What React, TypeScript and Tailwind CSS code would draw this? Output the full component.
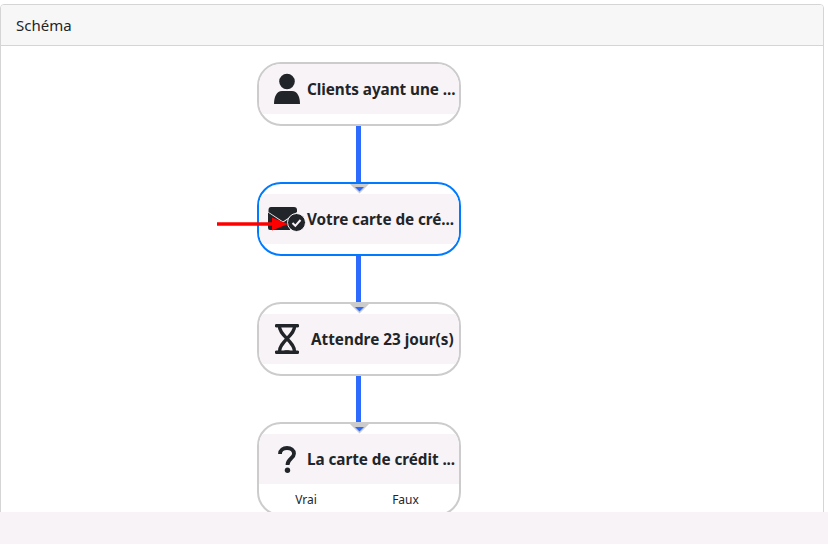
import React from "react";

const Person = () => (
  <svg width="28" height="32" viewBox="0 0 28 32" fill="#212529">
    <circle cx="14" cy="8.500" r="7.800" />
    <path d="M1 31 C1 24 3.500 18 9 18 L19 18 C24.500 18 27 24 27 31 Z" />
  </svg>
);

const Mail = () => (
  <div className="relative w-[38px] h-[32px]">
    <svg className="absolute left-0 top-[4px]" width="30" height="24" viewBox="0 0 30 24" fill="#212529">
      <path d="M3 0 H26 Q29 0 29 3 V5 L15 14.500 L0.500 5 V3 Q0.500 0 3 0 Z" />
      <path d="M0 5.500 L15 15.500 L22 11 L22 23 H2 Q0 23 0 21 Z" />
    </svg>
    <svg className="absolute left-[19px] top-[10px]" width="19" height="19" viewBox="0 0 19 19">
      <circle cx="9.500" cy="9.500" r="9" fill="#212529" stroke="#f8f3f7" strokeWidth="1" />
      <path d="M5.500 10 L8.300 12.800 L13.500 7" fill="none" stroke="#f8f3f7" strokeWidth="2" />
    </svg>
  </div>
);

const Hourglass = () => (
  <svg width="24" height="30" viewBox="0 0 24 30" fill="none" stroke="#212529" strokeLinecap="round">
    <path d="M1.500 1.700 H22.500 M1.500 28.300 H22.500" strokeWidth="3.400" />
    <path d="M4.500 2 C3.500 11 20.500 18 19.500 28 M19.500 2 C20.500 11 3.500 18 4.500 28" strokeWidth="3.400" />
    <path d="M7 28 C9 25.500 15 25.500 17 28 Z" fill="#212529" stroke="none" />
  </svg>
);

const Question = () => (
  <svg width="18" height="27" viewBox="0 0 18 27" fill="none" stroke="#212529" strokeWidth="3.800">
    <path d="M2 8 C2 3.800 5.200 2 9 2 C13 2 16 4.300 16 7.800 C16 12.200 9.500 12.500 9.500 19" />
    <circle cx="9.500" cy="24.300" r="2.700" fill="#212529" stroke="none" />
  </svg>
);

const Arrow = () => (
  <svg className="absolute left-[93px] top-[2px] z-10" width="19" height="10" viewBox="0 0 19 10">
    <path d="M0 0 H19 L9.500 9.500 Z" fill="#cccccc" />
    <path d="M5 3 H14 L9.500 7.500 Z" fill="#2d6bff" />
  </svg>
);

function Connector({ h }: { h: number }) {
  return <div className="w-[5px] mr-[1px] bg-[#2d6bff]" style={{ height: h }} />;
}

function Node({
  icon,
  label,
  height,
  active,
  first,
  labelClass,
  children,
}: {
  icon: React.ReactNode;
  label: string;
  height: string;
  active?: boolean;
  first?: boolean;
  labelClass?: string;
  children?: React.ReactNode;
}) {
  return (
    <div
      className={`relative w-[204px] shrink-0 rounded-[24px] border-2 bg-white overflow-hidden ${height} ${
        active ? "border-[#007bff]" : "border-[#cccccc]"
      } ${first ? "pt-0" : "pt-[10px]"}`}
    >
      <div className="flex items-center h-[50px] bg-[#f8f3f7] pl-[9px]">
        <div className="w-[38px] shrink-0 flex justify-center">{icon}</div>
        <span className={`whitespace-nowrap text-[15.3px] font-bold text-[#212529] ${labelClass ?? "ml-px tracking-[-0.06px]"}`}>
          {label}
        </span>
      </div>
      {children}
    </div>
  );
}

export default function App() {
  return (
    <div className="w-[828px] h-[544px] flex flex-col overflow-hidden bg-white font-['Noto_Sans','Open_Sans',sans-serif]">
      <div className="h-[512px] shrink-0 overflow-hidden pt-1 pr-1">
        <div className="w-[824px] h-[520px] rounded-[4px] border border-[#d5d5d5] bg-white overflow-hidden">
          <div className="h-[41px] flex items-center pl-[15px] bg-[#f7f7f7] border-b border-[#d5d5d5] text-[15px] text-[#212529]">
            Schéma
          </div>
          <div className="relative flex flex-col items-center w-[716px] pt-4">
            <Node first icon={<Person />} label="Clients ayant une ..." height="h-[64px]" />
            <Connector h={56} />
            <div className="relative">
              <Arrow />
              <Node active icon={<Mail />} label="Votre carte de cré..." height="h-[74px]" />
              <svg className="absolute left-[-40px] top-[35px] z-10" width="72" height="14" viewBox="0 0 72 14">
                <path d="M0 5.250 H56 V8.750 H0 Z" fill="#ff0000" />
                <path d="M55 0.500 L71 7 L55 13.500 Z" fill="#ff0000" />
              </svg>
            </div>
            <Connector h={46} />
            <div className="relative">
              <Arrow />
              <Node icon={<Hourglass />} label="Attendre 23 jour(s)" height="h-[74px]" labelClass="ml-[5px]" />
            </div>
            <Connector h={46} />
            <div className="relative">
              <Arrow />
              <Node icon={<Question />} label="La carte de crédit ..." height="h-[94px]">
                <div className="flex h-[30px] pt-[2px] items-center text-[12px] text-[#212529]">
                  <span className="w-[94px] text-center">Vrai</span>
                  <span className="w-[105px] text-center">Faux</span>
                </div>
              </Node>
            </div>
          </div>
        </div>
      </div>
      <div className="h-8 shrink-0 bg-[#f8f3f7]" />
    </div>
  );
}
